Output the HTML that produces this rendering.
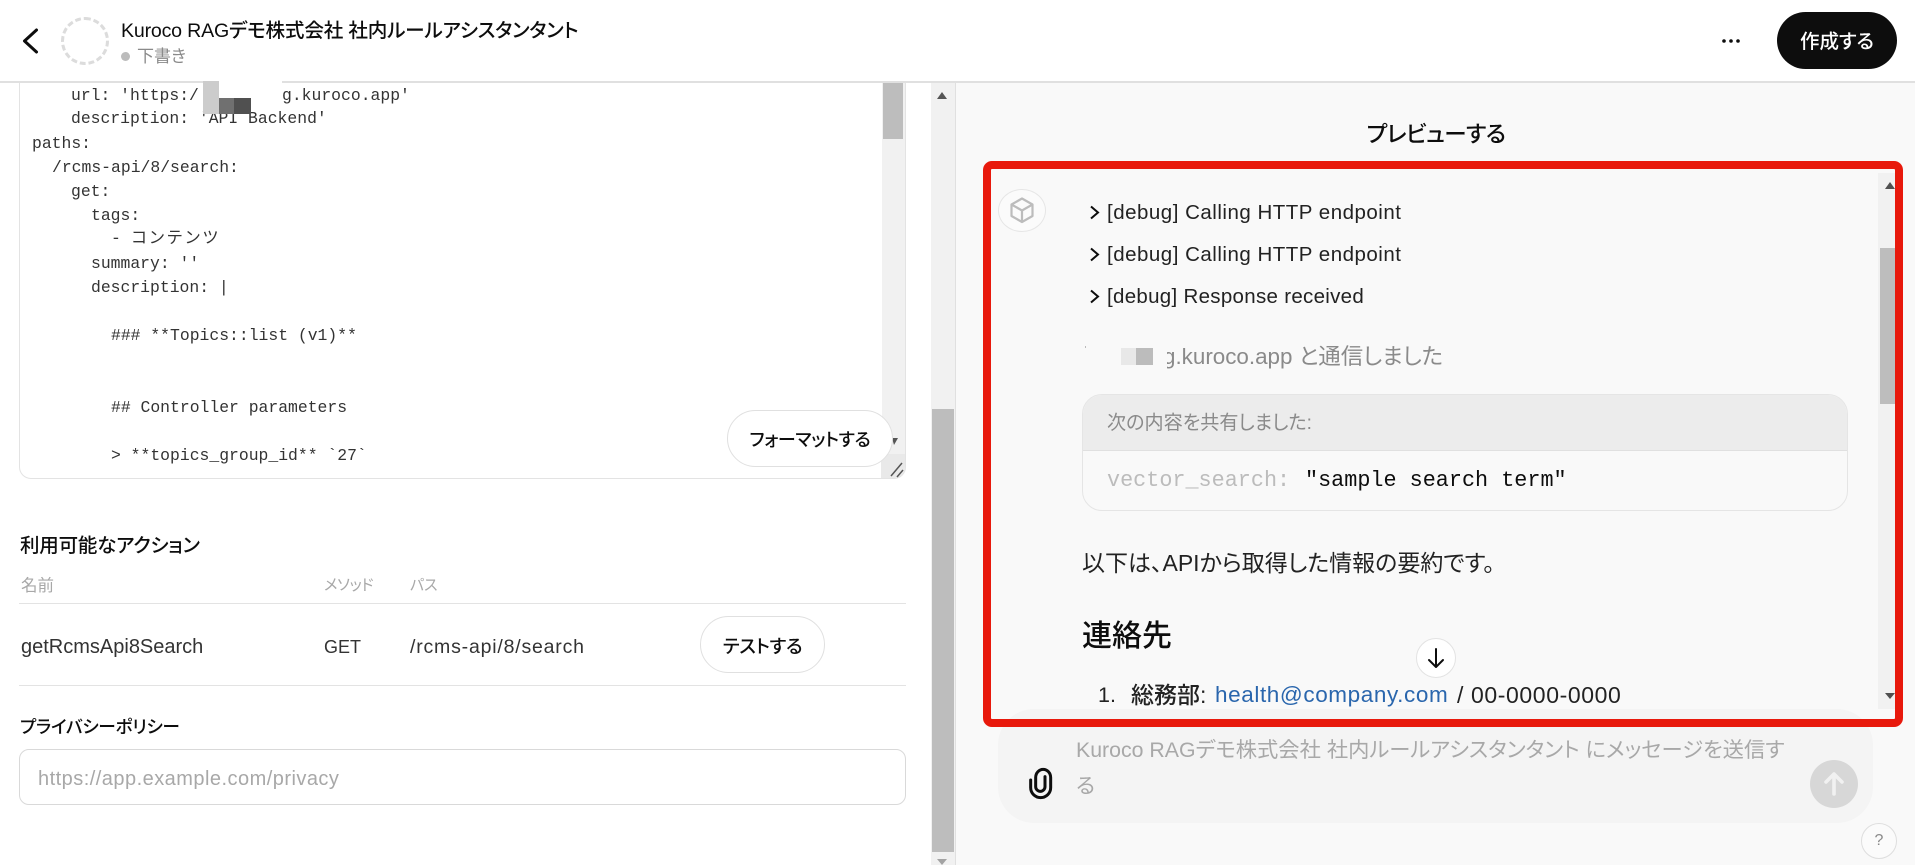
<!DOCTYPE html>
<html lang="ja"><head><meta charset="utf-8"><title>Kuroco RAG</title>
<style>
html,body{margin:0;padding:0;width:1915px;height:865px;overflow:hidden;background:#fff}
body{position:relative;font-family:"Liberation Sans","Noto Sans CJK JP",sans-serif;color:#0d0d0d;font-feature-settings:"palt"}
.a{position:absolute}
.t{position:absolute;white-space:nowrap;height:30px;line-height:30px}
.m{position:absolute;white-space:pre;font-family:"Liberation Mono","Noto Sans CJK JP",monospace;font-size:16.4px;height:24px;line-height:24px;color:#333;font-feature-settings:normal}
.b{position:absolute;box-sizing:border-box;border:1px solid #e0e0e0;border-radius:30px;background:#fff;text-align:center}
svg{position:absolute;overflow:visible}
</style></head><body>

<!-- left -->
<div class="a" style="left:19px;top:60px;width:887px;height:419px;box-sizing:border-box;border:1px solid #e3e3e3;border-radius:0 0 12px 12px;background:#fff"></div>
<div class="a" style="left:882px;top:82px;width:23px;height:372px;background:#f1f1f1"></div>
<div class="a" style="left:883px;top:82px;width:20px;height:57px;background:#bdbdbd"></div>
<div class="a" style="left:881px;top:454px;width:24px;height:24px;background:#e9e9e9;border-radius:0 0 11px 0"></div>
<svg style="left:0;top:0" width="1" height="1"><path d="M891 476L902 463M897 477L903 470" stroke="#555" stroke-width="1.5" fill="none"/><path d="M892 438h6l-4 7z" fill="#555"/></svg>

<div class="m" style="left:71px;top:84px">url: 'https:/</div>
<div class="m" style="left:282px;top:84px">g.kuroco.app'</div>
<div class="m" style="left:71px;top:107px">description: 'API Backend'</div>
<div class="m" style="left:32px;top:132px">paths:</div>
<div class="m" style="left:52px;top:156px">/rcms-api/8/search:</div>
<div class="m" style="left:71px;top:180px">get:</div>
<div class="m" style="left:91px;top:204px">tags:</div>
<div class="m" style="left:111px;top:227px">- <span style="letter-spacing:1.5px">コンテンツ</span></div>
<div class="m" style="left:91px;top:252px">summary: ''</div>
<div class="m" style="left:91px;top:276px">description: |</div>
<div class="m" style="left:111px;top:324px">### **Topics::list (v1)**</div>
<div class="m" style="left:111px;top:396px">## Controller parameters</div>
<div class="m" style="left:111px;top:444px">&gt; **topics_group_id** `27`</div>

<div class="a" style="left:203px;top:81px;width:16px;height:33px;background:#ccc"></div>
<div class="a" style="left:219px;top:98px;width:15px;height:16px;background:#707070"></div>
<div class="a" style="left:234px;top:98px;width:17px;height:16px;background:#505050"></div>

<div class="b" style="left:727px;top:410px;width:166px;height:57px;line-height:59px;font-size:18px;font-weight:500;letter-spacing:-.3px">フォーマットする</div>

<div class="t" style="left:20px;top:531px;font-size:19.5px;font-weight:500;letter-spacing:-.2px">利用可能なアクション</div>
<div class="t" style="left:21px;top:571px;font-size:16.5px;color:#a8a8a8">名前</div>
<div class="t" style="left:324px;top:571px;font-size:15.5px;color:#a8a8a8;letter-spacing:-.4px">メソッド</div>
<div class="t" style="left:410px;top:571px;font-size:15px;color:#a8a8a8">パス</div>
<div class="a" style="left:19px;top:603px;width:887px;height:1px;background:#e3e3e3"></div>
<div class="t" style="left:21px;top:632px;font-size:20px;color:#333">getRcmsApi8Search</div>
<div class="t" style="left:324px;top:632px;font-size:18px;color:#333">GET</div>
<div class="t" style="left:410px;top:632px;font-size:19.5px;color:#333;letter-spacing:.8px">/rcms-api/8/search</div>
<div class="b" style="left:700px;top:616px;width:125px;height:57px;line-height:60px;font-size:18.5px;font-weight:500;letter-spacing:-.3px">テストする</div>
<div class="a" style="left:19px;top:685px;width:887px;height:1px;background:#e3e3e3"></div>
<div class="t" style="left:20px;top:712px;font-size:17.7px;font-weight:500;letter-spacing:-.3px">プライバシーポリシー</div>
<div class="a" style="left:19px;top:749px;width:887px;height:56px;box-sizing:border-box;border:1px solid #d9d9d9;border-radius:10px"></div>
<div class="t" style="left:38px;top:764px;font-size:20px;color:#a8a8a8;letter-spacing:.47px">https://app.example.com/privacy</div>

<!-- page scrollbar -->
<div class="a" style="left:931px;top:83px;width:24px;height:782px;background:#f1f1f1"></div>
<div class="a" style="left:932px;top:409px;width:22px;height:443px;background:#bdbdbd"></div>
<svg style="left:0;top:0" width="1" height="1"><path d="M942 92l5 7h-10z" fill="#555"/><path d="M937 859h10l-5 6z" fill="#a3a3a3"/></svg>

<!-- right -->
<div class="a" style="left:955px;top:83px;width:960px;height:782px;background:#f9f9f9;box-sizing:border-box;border-left:1px solid #e0e0e0"></div>
<div class="t" style="left:1236px;width:400px;text-align:center;top:120px;font-size:22.5px;font-weight:500;letter-spacing:-.6px">プレビューする</div>

<div class="a" style="left:1878px;top:173px;width:17px;height:536px;background:#f1f1f1"></div>
<div class="a" style="left:1880px;top:248px;width:15px;height:156px;background:#bdbdbd"></div>
<svg style="left:0;top:0" width="1" height="1"><path d="M1890 182l5 7h-10z" fill="#505050"/><path d="M1885 693h10l-5 6z" fill="#505050"/></svg>

<div class="a" style="left:998px;top:189px;width:48px;height:43px;box-sizing:border-box;border:1.5px solid #e6e6e6;border-radius:50%;background:#fbfbfb"></div>
<svg style="left:1009px;top:197px" width="30" height="27" viewBox="0 0 30 27" fill="none" stroke="#bcbcbc" stroke-width="2.2" stroke-linejoin="round"><path d="M13 1.5L23.5 7.5V19L13 25L2.5 19V7.5Z"/><path d="M2.5 7.5L13 13.5L23.5 7.5M13 13.5V25"/></svg>

<svg style="left:0;top:0" width="1" height="1" fill="none" stroke="#0d0d0d" stroke-width="2"><path d="M1091 206.500l7 6l-7 6M1091 248.500l7 6l-7 6M1091 290.500l7 6l-7 6"/></svg>
<div class="t" style="left:1107px;top:198px;font-size:20.5px;color:#222;letter-spacing:.5px">[debug] Calling HTTP endpoint</div>
<div class="t" style="left:1107px;top:240px;font-size:20.5px;color:#222;letter-spacing:.5px">[debug] Calling HTTP endpoint</div>
<div class="t" style="left:1107px;top:282px;font-size:20.5px;color:#222;letter-spacing:.3px">[debug] Response received</div>

<div class="t" style="left:1163px;top:342px;font-size:22.4px;color:#8a8a8a">g.kuroco.app と通信しました</div>
<div class="a" style="left:1153px;top:345px;width:14px;height:30px;background:#f9f9f9"></div>
<div class="a" style="left:1085px;top:346px;width:1px;height:2px;background:#bbb"></div>
<div class="a" style="left:1121px;top:348px;width:15px;height:17px;background:#e8e8e8"></div>
<div class="a" style="left:1136px;top:348px;width:17px;height:17px;background:#bcbcbc"></div>

<div class="a" style="left:1082px;top:394px;width:766px;height:117px;box-sizing:border-box;border:1px solid #e5e5e5;border-radius:20px;overflow:hidden">
  <div style="height:55px;background:#ececec;border-bottom:1px solid #e0e0e0"></div>
</div>
<div class="t" style="left:1107px;top:409px;font-size:19.1px;color:#8a8a8a">次の内容を共有しました:</div>
<div class="t" style="left:1107px;top:466px;font-size:21.8px;font-family:'Liberation Mono',monospace;color:#bcbcbc;font-feature-settings:normal">vector_search:</div>
<div class="t" style="left:1305px;top:466px;font-size:21.8px;font-family:'Liberation Mono',monospace;color:#0d0d0d;font-feature-settings:normal">"sample search term"</div>

<div class="t" style="left:1082px;top:548px;font-size:23px;color:#222">以下は、APIから取得した情報の要約です。</div>
<div class="t" style="left:1082px;top:622px;font-size:30px;font-weight:500;height:30px">連絡先</div>
<div class="t" style="left:1098px;top:680px;font-size:21.5px;color:#222">1.</div>
<div class="t" style="left:1131px;top:680px;font-size:23px;color:#222;font-weight:500">総務部:</div>
<div class="t" style="left:1215px;top:680px;font-size:22.5px;color:#2a66ad;letter-spacing:.6px">health@company.com</div>
<div class="t" style="left:1457px;top:680px;font-size:23px;color:#222;letter-spacing:.6px">/ 00-0000-0000</div>

<div class="a" style="left:1416px;top:638px;width:40px;height:40px;box-sizing:border-box;border:1px solid #e3e3e3;border-radius:50%;background:#fff"></div>
<svg style="left:1416px;top:638px" width="40" height="40" viewBox="0 0 40 40" fill="none" stroke="#0d0d0d" stroke-width="2" stroke-linecap="round" stroke-linejoin="round"><path d="M20 11V29M13 22L20 29L27 22"/></svg>

<!-- input -->
<div class="a" style="left:998px;top:709px;width:875px;height:114px;background:#f4f4f4;border-radius:36px"></div>
<div class="t" style="left:1076px;top:735px;font-size:21.3px;color:#a8a8a8">Kuroco RAGデモ株式会社 社内ルールアシスタンタント にメッセージを送信す</div>
<div class="t" style="left:1076px;top:771px;font-size:21.3px;color:#a8a8a8">る</div>
<svg style="left:1010px;top:755px" width="90" height="60" viewBox="0 0 270 180" fill="none" stroke="#0d0d0d" stroke-width="9" stroke-linecap="round"><path d="M62 75V98A30 30 0 0 0 122 98V68A22.500 25 0 0 0 77 68V95A14 14 0 0 0 105 95V65"/></svg>
<div class="a" style="left:1810px;top:760px;width:48px;height:48px;border-radius:50%;background:#d7d7d7"></div>
<svg style="left:1810px;top:760px" width="48" height="48" viewBox="0 0 48 48" fill="none" stroke="#f1f1f1" stroke-width="3.6" stroke-linecap="round" stroke-linejoin="round"><path d="M24 34V14M16 22L24 14L32 22"/></svg>
<div class="a" style="left:1861px;top:823px;width:36px;height:36px;box-sizing:border-box;border:1px solid #dedede;border-radius:50%;background:#fbfbfb;text-align:center;line-height:34px;font-size:16px;color:#8a8a8a">?</div>

<!-- red box -->
<div class="a" style="left:983px;top:161px;width:920px;height:566px;box-sizing:border-box;border:8px solid #e8190c;border-radius:9px"></div>

<!-- header -->
<div class="a" style="left:0;top:0;width:1915px;height:81px;background:#fff"></div>
<div class="a" style="left:0;top:81px;width:203px;height:2px;background:#e0e0e0"></div>
<div class="a" style="left:251px;top:81px;width:1664px;height:2px;background:#e0e0e0"></div>
<div class="a" style="left:219px;top:81px;width:63px;height:17px;background:#fff"></div>
<div class="a" style="left:203px;top:81px;width:16px;height:33px;background:#ccc"></div>
<div class="a" style="left:219px;top:98px;width:15px;height:16px;background:#707070"></div>
<svg style="left:0;top:0" width="1" height="1" fill="none" stroke="#0d0d0d" stroke-width="3" stroke-linecap="round" stroke-linejoin="round"><path d="M36.500 30L24.500 41L36.500 52"/></svg>
<div class="a" style="left:61px;top:17px;width:48px;height:48px;box-sizing:border-box;border:3px dashed #dcdcdc;border-radius:50%"></div>
<div class="t" style="left:121px;top:16px;font-size:19.6px;font-weight:500;letter-spacing:-.2px">Kuroco RAGデモ株式会社 社内ルールアシスタンタント</div>
<div class="a" style="left:121px;top:52px;width:9px;height:9px;border-radius:50%;background:#bcbcbc"></div>
<div class="t" style="left:137px;top:42px;font-size:17px;color:#8a8a8a">下書き</div>
<svg style="left:0;top:0" width="1" height="1" fill="#0d0d0d"><circle cx="1724" cy="41" r="1.800"/><circle cx="1731" cy="41" r="1.800"/><circle cx="1738" cy="41" r="1.800"/></svg>
<div class="a" style="left:1777px;top:12px;width:120px;height:57px;border-radius:29px;background:#0d0d0d;color:#fff;text-align:center;line-height:61px;font-size:19.5px;font-weight:500">作成する</div>
</body></html>
